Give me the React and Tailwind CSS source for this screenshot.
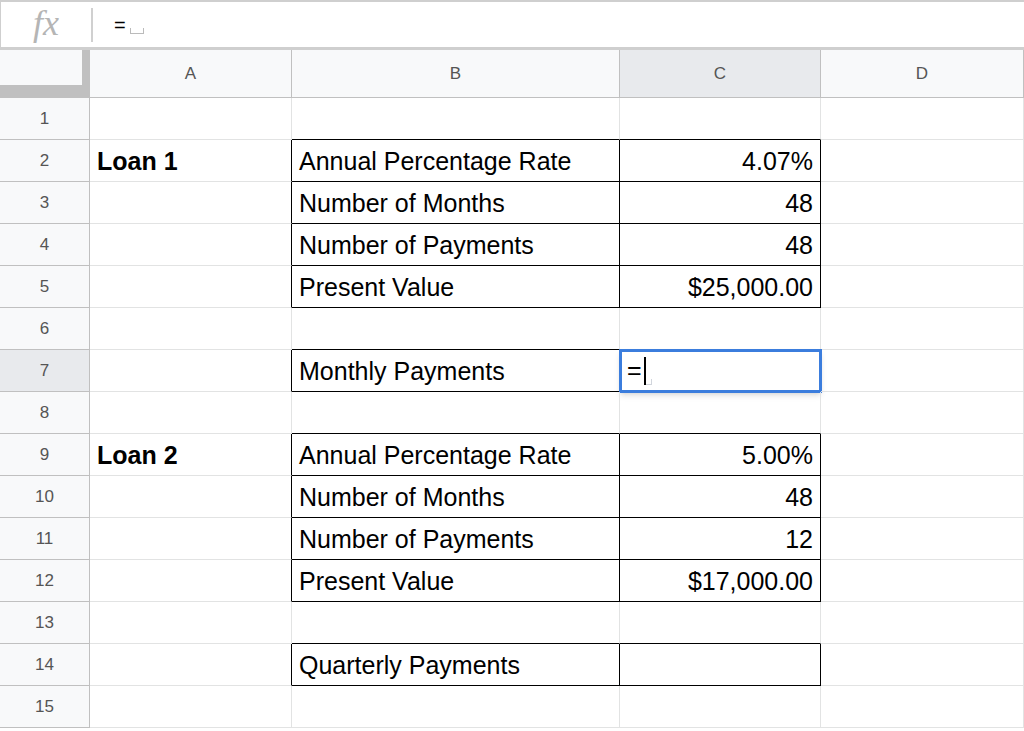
const boxed = new Set([2, 3, 4, 5, 7, 9, 10, 11, 12, 14]);

const data = {
  2: ["Loan 1", "Annual Percentage Rate", "4.07%"],
  3: ["", "Number of Months", "48"],
  4: ["", "Number of Payments", "48"],
  5: ["", "Present Value", "$25,000.00"],
  7: ["", "Monthly Payments", ""],
  9: ["Loan 2", "Annual Percentage Rate", "5.00%"],
  10: ["", "Number of Months", "48"],
  11: ["", "Number of Payments", "12"],
  12: ["", "Present Value", "$17,000.00"],
  14: ["", "Quarterly Payments", ""],
};

const widths = ["w-[202px]", "w-[328px]", "w-[201px]", "flex-1"];

function Cell({ r, col, children }) {
  const right = col < 3 && boxed.has(r) ? "border-r-black" : "border-r-[#e2e3e3]";
  const bottom =
    (col === 1 || col === 2) && (boxed.has(r) || boxed.has(r + 1)) ? "border-b-black" : "border-b-[#e2e3e3]";
  const align = col === 2 ? "justify-end" : "justify-start";
  const weight = col === 0 ? "font-bold" : "";
  return (
    <div className={`${widths[col]} relative h-[42px] border-r border-b ${right} ${bottom} flex items-center ${align} px-[7px] pt-[2px] text-[25px] text-black ${weight}`}>
      {children}
      {r === 7 && col === 2 && (
        <div className="absolute -left-px -top-px w-[203px] h-[44px] border-[3px] border-[#3b7ddd] bg-white flex items-center px-[5px] shadow-md">
          <span>=</span>
          <span className="ml-[2px] h-[28px] w-[2px] bg-black"></span>
          <span className="mt-[22px] h-[6px] w-[6px] border-r border-b border-gray-300"></span>
        </div>
      )}
    </div>
  );
}

export default function App() {
  const rows = Array.from({ length: 15 }, (_, i) => i + 1);
  return (
    <div className="w-[1024px] h-[731px] overflow-hidden bg-white" style={{ fontFamily: '"Liberation Sans", Arial, sans-serif' }}>
      <div className="h-[50px] border-t-2 border-t-[#cfcfcf] border-b-[3px] border-b-[#cfcfcf] border-l border-l-[#cfcfcf] flex items-center">
        <span className="w-[90px] text-center text-[36px] italic text-[#b5b5b5] -mt-[4px]" style={{ fontFamily: '"Liberation Serif", serif' }}>fx</span>
        <span className="h-[34px] w-[2px] bg-[#d0d0d0]"></span>
        <span className="ml-[21px] text-[20px] text-black">=</span>
        <span className="mt-[12px] ml-[4px] h-[6px] w-[14px] border-l border-r border-b border-[#bbb]"></span>
      </div>
      <div className="flex h-[48px] bg-[#f8f9fa] border-b border-[#c0c0c0] text-[17px] text-[#555]">
        <div className="w-[90px] border-r-[8px] border-b-[12px] border-[#c0c0c0] bg-[#f8f9fa]"></div>
        {["A", "B", "C", "D"].map((c, i) => (
          <div key={c} className={`${widths[i]} flex items-center justify-center border-r border-[#c0c0c0] ${c === "C" ? "bg-[#e8eaed]" : ""}`}>{c}</div>
        ))}
      </div>
      {rows.map((r) => {
        const d = data[r] || ["", "", ""];
        return (
          <div key={r} className="flex">
            <div className={`w-[90px] h-[42px] flex items-center justify-center text-[17px] text-[#555] border-r border-b border-[#c0c0c0] ${r === 7 ? "bg-[#e8eaed]" : "bg-[#f8f9fa]"}`}>{r}</div>
            <Cell r={r} col={0}>{d[0]}</Cell>
            <Cell r={r} col={1}>{d[1]}</Cell>
            <Cell r={r} col={2}>{d[2]}</Cell>
            <Cell r={r} col={3}></Cell>
          </div>
        );
      })}
    </div>
  );
}
